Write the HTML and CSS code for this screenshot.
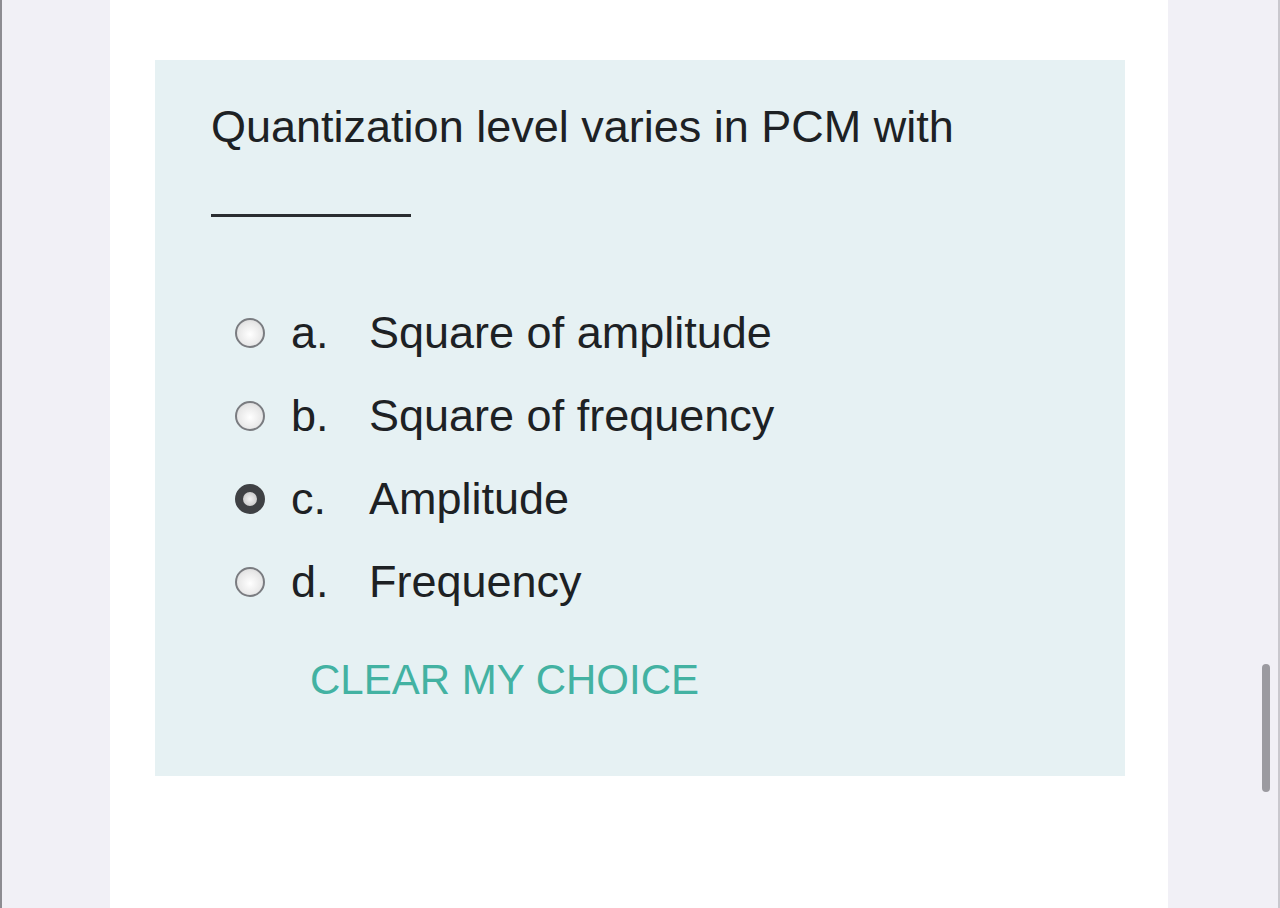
FILE: index.html
```html
<!DOCTYPE html>
<html>
<head>
<meta charset="utf-8">
<link rel="stylesheet" href="styles.css">
</head>
<body>
<div class="page">
  <div class="side side-left"></div>
  <div class="main">
    <div class="card">
      <div class="question">Quantization level varies in PCM with</div>
      <div class="blank"></div>
      <div class="options">
        <div class="opt"><span class="radio"></span><span class="letter">a.</span><span class="label">Square of amplitude</span></div>
        <div class="opt"><span class="radio"></span><span class="letter">b.</span><span class="label">Square of frequency</span></div>
        <div class="opt"><span class="radio checked"></span><span class="letter">c.</span><span class="label">Amplitude</span></div>
        <div class="opt"><span class="radio"></span><span class="letter">d.</span><span class="label">Frequency</span></div>
      </div>
      <div class="clear">CLEAR MY CHOICE</div>
    </div>
  </div>
  <div class="side side-right"><div class="scrollbar"></div></div>
</div>
</body>
</html>
```
FILE: styles.css
```css
html, body { margin: 0; padding: 0; }
body { width: 1280px; height: 908px; overflow: hidden; font-family: "Liberation Sans", Arial, sans-serif; background: #f1f0f6; }
.page { display: flex; height: 908px; }
.side { background: #f1f0f6; }
.side-left { width: 108px; border-left: 2px solid #8d8c92; }
.side-right { width: 110px; border-right: 2px solid #c9c8ce; position: relative; }
.scrollbar { position: absolute; left: 94px; top: 664px; width: 8px; height: 128px; border-radius: 4px; background: #9b9aa0; }
.main { width: 1058px; background: #ffffff; padding-top: 60px; box-sizing: border-box; }
.card { margin-left: 45px; width: 970px; height: 716px; background: #e6f1f3; box-sizing: border-box; padding: 42px 0 0 56px; }
.question { font-size: 45px; color: #1d2124; line-height: 50px; }
.blank { width: 200px; height: 3px; background: #2a2d30; margin-top: 62px; }
.options { margin-top: 74px; }
.opt { display: flex; align-items: center; height: 83px; font-size: 45px; color: #1d2124; }
.radio { border-radius: 50%; border: 2.5px solid #7a7c80; background: radial-gradient(circle at 50% 55%, #ffffff 0%, #e8e8e8 60%, #d0d0d0 100%); margin-left: 24px; box-sizing: border-box; width: 30px; height: 30px; flex: none; }
.radio.checked { border: 8px solid #3f4144; background: radial-gradient(circle, #f2f2f2 0%, #bdbdbd 100%); }
.letter { width: 78px; margin-left: 26px; }
.clear { font-size: 42px; color: #43b2a2; margin-left: 99px; margin-top: 33px; }
```
